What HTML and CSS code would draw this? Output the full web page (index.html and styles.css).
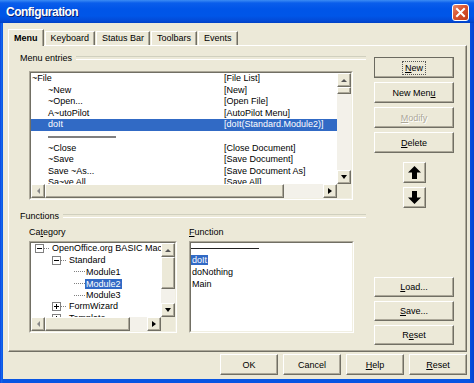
FILE: index.html
```html
<!DOCTYPE html>
<html lang="en">
<head>
    <meta charset="UTF-8">
    <meta name="viewport" content="width=device-width, initial-scale=1.0">
    <title>Configuration</title>
    <link rel="stylesheet" href="styles.css">
</head>
<body>
    <div class="window">
        <div class="titlebar">
            <span class="title">Configuration</span>
            <span class="close">
                <svg width="11" height="11" viewBox="0 0 11 11"><path d="M2 2 L9 9 M9 2 L2 9" stroke="#fff" stroke-width="2" stroke-linecap="square"/></svg>
            </span>
        </div>
        <div class="client">
            <div class="tabs">
                <span class="tab active">Menu</span>
                <span class="tab">Keyboard</span>
                <span class="tab">Status Bar</span>
                <span class="tab">Toolbars</span>
                <span class="tab">Events</span>
            </div>
            <div class="panel">
                <div class="main">
                    <div class="group-title"><span>Menu entries</span></div>
                    <div class="listbox menu-list">
                        <div class="inner">
                            <div class="rows">
                                <div class="row"><span class="c1">~File</span><span class="c2">[File List]</span></div>
                                <div class="row"><span class="c1 ind">~New</span><span class="c2">[New]</span></div>
                                <div class="row"><span class="c1 ind">~Open...</span><span class="c2">[Open File]</span></div>
                                <div class="row"><span class="c1 ind">A~utoPilot</span><span class="c2">[AutoPilot Menu]</span></div>
                                <div class="row selected"><span class="c1 ind">doIt</span><span class="c2">[doIt(Standard.Module2)]</span></div>
                                <div class="row"><span class="c1 ind"><span class="sep-line"></span></span></div>
                                <div class="row"><span class="c1 ind">~Close</span><span class="c2">[Close Document]</span></div>
                                <div class="row"><span class="c1 ind">~Save</span><span class="c2">[Save Document]</span></div>
                                <div class="row"><span class="c1 ind">Save ~As...</span><span class="c2">[Save Document As]</span></div>
                                <div class="row"><span class="c1 ind">Sa~ve All</span><span class="c2">[Save All]</span></div>
                            </div>
                            <div class="vscroll">
                                <span class="sbtn"><i class="arr up"></i></span>
                                <span class="thumb menu-vthumb"></span>
                                <span class="track"></span>
                                <span class="sbtn"><i class="arr down"></i></span>
                            </div>
                            <div class="hscroll">
                                <span class="sbtn"><i class="arr left"></i></span>
                                <span class="thumb menu-hthumb"></span>
                                <span class="track"></span>
                                <span class="sbtn"><i class="arr right"></i></span>
                            </div>
                            <div class="corner"></div>
                        </div>
                    </div>

                    <div class="group-title functions-title"><span>Functions</span></div>
                    <div class="func-grid">
                        <span class="field-label">Ca<u>t</u>egory</span>
                        <span class="field-label"><u>F</u>unction</span>
                        <div class="listbox tree">
                            <div class="inner">
                                <div class="rows">
                                    <div class="node"><span class="exp"></span><span class="stub"></span><span>OpenOffice.org BASIC Macros</span></div>
                                    <div class="node l1"><span class="exp"></span><span class="stub"></span><span>Standard</span></div>
                                    <div class="node l2"><span class="branch"></span><span class="label">Module1</span></div>
                                    <div class="node l2"><span class="branch"></span><span class="label selected">Module2</span></div>
                                    <div class="node l2"><span class="branch"></span><span class="label">Module3</span></div>
                                    <div class="node l1"><span class="exp plus"></span><span class="stub"></span><span>FormWizard</span></div>
                                    <div class="node l1"><span class="exp plus"></span><span class="stub"></span><span>Template</span></div>
                                </div>
                                <div class="vscroll">
                                    <span class="sbtn"><i class="arr up"></i></span>
                                    <span class="thumb tree-vthumb"></span>
                                    <span class="track"></span>
                                    <span class="sbtn"><i class="arr down"></i></span>
                                </div>
                                <div class="hscroll">
                                    <span class="sbtn"><i class="arr left"></i></span>
                                    <span class="thumb tree-hthumb"></span>
                                    <span class="track"></span>
                                    <span class="sbtn"><i class="arr right"></i></span>
                                </div>
                                <div class="corner"></div>
                            </div>
                        </div>
                        <div class="listbox func-list">
                            <div class="inner">
                                <div class="rows">
                                    <div class="frow"><span class="func-sep"></span></div>
                                    <div class="frow"><span class="label selected">doIt</span></div>
                                    <div class="frow"><span class="label">doNothing</span></div>
                                    <div class="frow"><span class="label">Main</span></div>
                                </div>
                            </div>
                        </div>
                    </div>
                </div>

                <div class="side">
                    <div class="btn-stack">
                        <button class="btn default"><span class="focus"><u>N</u>ew</span></button>
                        <button class="btn">New Men<u>u</u></button>
                        <button class="btn disabled"><u>M</u>odify</button>
                        <button class="btn"><u>D</u>elete</button>
                        <button class="btn arrow-btn first-arrow">
                            <svg width="13" height="13" viewBox="0 0 13 13"><polygon points="6.5,0 13,6.5 9,6.5 9,13 4,13 4,6.5 0,6.5" fill="#000"/></svg>
                        </button>
                        <button class="btn arrow-btn">
                            <svg width="13" height="13" viewBox="0 0 13 13"><polygon points="6.5,13 13,6.5 9,6.5 9,0 4,0 4,6.5 0,6.5" fill="#000"/></svg>
                        </button>
                    </div>
                    <div class="btn-stack lower">
                        <button class="btn small"><u>L</u>oad...</button>
                        <button class="btn small"><u>S</u>ave...</button>
                        <button class="btn small">R<u>e</u>set</button>
                    </div>
                </div>
            </div>
            <div class="footer">
                <button class="btn">OK</button>
                <button class="btn">Cancel</button>
                <button class="btn"><u>H</u>elp</button>
                <button class="btn"><u>R</u>eset</button>
            </div>
        </div>
    </div>
</body>
</html>
```

FILE: styles.css
```css
* {
    box-sizing: border-box;
}
body {
    margin: 0;
    overflow: hidden;
    font-family: 'Liberation Sans', Arial, sans-serif;
    font-size: 9px;
    color: #000;
}
.window {
    width: 474px;
    height: 383px;
    display: flex;
    flex-direction: column;
    background: linear-gradient(90deg, #0831D9 0, #166AEE 1px, #0855E3 3px, #0855E3 469px, #0843D0 474px);
}
.titlebar {
    height: 23px;
    flex: none;
    display: flex;
    align-items: center;
    justify-content: space-between;
    padding: 0 5px 0 6px;
    background: linear-gradient(#3C8CF4 0, #0A5EEB 3px, #0055E8 9px, #0056E8 16px, #0349D5 21px, #0040C4 23px);
}
.title {
    color: #fff;
    font-size: 12px;
    font-weight: bold;
    letter-spacing: -0.5px;
    text-shadow: 1px 1px #0A1F74;
}
.close {
    width: 17px;
    height: 17px;
    margin-top: 1px;
    border: 1px solid #fff;
    border-radius: 3px;
    background: linear-gradient(135deg, #E98B6D, #D9532F 45%, #C03A17);
    display: flex;
    align-items: center;
    justify-content: center;
}
.client {
    flex: 1;
    margin: 0 4px 4px 3px;
    background: #ECE9D8;
    padding: 6px 3px 0 5px;
    display: flex;
    flex-direction: column;
}
.tabs {
    height: 16px;
    display: flex;
    align-items: flex-end;
}
.tab {
    height: 14px;
    line-height: 13px;
    padding: 0 5px;
    border-left: 1px solid #fff;
    border-top: 1px solid #fff;
    border-right: 1px solid #716F64;
    box-shadow: inset -1px 0 #ACA899;
    margin-right: 1px;
    background: #ECE9D8;
}
.tab.active {
    height: 17px;
    line-height: 16px;
    margin-bottom: -1px;
    font-weight: bold;
    position: relative;
    z-index: 1;
}
.panel {
    height: 307px;
    border: 1px solid;
    border-color: #fff #716F64 #716F64 #fff;
    box-shadow: inset -1px -1px #ACA899;
    padding: 6px 12px 6px 0;
    display: grid;
    grid-template-columns: 357px 80px;
    column-gap: 8px;
}
.group-title {
    height: 12px;
    line-height: 12px;
    padding-left: 11px;
    display: flex;
    align-items: center;
}
.group-title::after {
    content: '';
    flex: 1;
    height: 2px;
    margin-left: 4px;
    border-top: 1px solid #D0D0BF;
    border-bottom: 1px solid #fff;
}
.functions-title {
    margin-top: 10px;
}
.listbox {
    border: 1px solid;
    border-color: #ACA899 #fff #fff #ACA899;
    background: #fff;
}
.listbox .inner {
    height: 100%;
    border: 1px solid;
    border-color: #716F64 #F1EFE2 #F1EFE2 #716F64;
    display: grid;
    grid-template-columns: 1fr 14px;
    grid-template-rows: 1fr 14px;
    overflow: hidden;
}
.menu-list {
    margin: 7px 0 0 20px;
    width: 324px;
    height: 129px;
}
.rows {
    overflow: hidden;
    min-width: 0;
    white-space: nowrap;
}
.row {
    height: 11.6px;
    line-height: 11.6px;
    display: flex;
    padding-left: 1px;
}
.row.selected {
    background: #316AC5;
    color: #fff;
}
.c1 {
    width: 192px;
    flex: none;
}
.c1.ind {
    padding-left: 16px;
}
.sep-line {
    display: inline-block;
    width: 68px;
    height: 2px;
    background: #808080;
    vertical-align: middle;
}
.vscroll, .hscroll {
    display: flex;
    background: #F3F1EA;
}
.vscroll {
    flex-direction: column;
}
.sbtn, .thumb {
    flex: none;
    background: #ECE9D8;
    border: 1px solid;
    border-color: #fff #716F64 #716F64 #fff;
    box-shadow: inset -1px -1px #ACA899;
    display: flex;
    align-items: center;
    justify-content: center;
}
.vscroll .sbtn {
    height: 14px;
}
.hscroll .sbtn {
    width: 14px;
}
.track {
    flex: 1;
}
.corner {
    background: #ECE9D8;
}
.arr {
    width: 0;
    height: 0;
    border: 3px solid transparent;
}
.arr.up {
    border-top: 0;
    border-bottom: 3px solid #555;
}
.arr.down {
    border-bottom: 0;
    border-top: 4px solid #000;
}
.arr.left {
    border-left: 0;
    border-right: 3px solid #888;
}
.arr.right {
    border-right: 0;
    border-left: 4px solid #000;
}
.menu-vthumb {
    height: 7px;
}
.menu-hthumb {
    width: 239px;
}
.tree-vthumb {
    height: 32px;
}
.tree-hthumb {
    width: 85px;
}
.func-grid {
    margin: 4px 0 0 20px;
    display: grid;
    grid-template-columns: 148px 165px;
    grid-template-rows: 12px 92px;
    column-gap: 12px;
    row-gap: 3px;
}
.field-label {
    line-height: 12px;
}
.node, .frow {
    height: 11.6px;
    line-height: 11.6px;
    display: flex;
    align-items: center;
    padding-left: 4px;
}
.node.l1 {
    padding-left: 21px;
}
.node.l2 {
    padding-left: 43px;
}
.exp {
    width: 9px;
    height: 9px;
    flex: none;
    border: 1px solid #808080;
    background: #fff linear-gradient(#000, #000) center / 5px 1px no-repeat;
}
.exp.plus {
    background:
        linear-gradient(#000, #000) center / 5px 1px no-repeat,
        linear-gradient(#000, #000) center / 1px 5px no-repeat,
        #fff;
}
.stub {
    width: 6px;
    height: 1px;
    margin-right: 2px;
    flex: none;
    background: repeating-linear-gradient(90deg, #808080 0 1px, transparent 1px 2px);
}
.branch {
    width: 11px;
    height: 1px;
    flex: none;
    background: repeating-linear-gradient(90deg, #808080 0 1px, transparent 1px 2px);
}
.label {
    padding: 0 1px;
    line-height: 10px;
}
.label.selected {
    background: #316AC5;
    color: #fff;
}
.func-list .inner {
    display: block;
}
.frow {
    padding-left: 0;
}
.func-sep {
    display: block;
    width: 68px;
    height: 1px;
    background: #222;
}
.side {
    display: flex;
    flex-direction: column;
    justify-content: space-between;
}
.btn-stack {
    display: flex;
    flex-direction: column;
    gap: 4px;
    margin-top: 5px;
}
.btn {
    height: 21px;
    padding: 0;
    font-family: inherit;
    font-size: 9px;
    color: #000;
    background: #ECE9D8;
    border: 1px solid;
    border-color: #fff #716F64 #716F64 #fff;
    box-shadow: inset -1px -1px #ACA899;
    display: flex;
    align-items: center;
    justify-content: center;
}
.btn.default {
    outline: 1px solid #6B6A60;
    outline-offset: -1px;
    border-color: #fff #404040 #404040 #fff;
}
.focus {
    padding: 1px 2px;
    border: 1px dotted #555;
}
.btn.disabled {
    color: #ACA899;
    text-shadow: 1px 1px #fff;
}
.arrow-btn {
    width: 23px;
    align-self: center;
}
.first-arrow {
    margin-top: 5px;
}
.btn-stack.lower {
    margin-top: 0;
}
.btn.small {
    height: 20px;
}
.footer {
    margin-top: 2px;
    display: flex;
    justify-content: flex-end;
    gap: 5px;
}
.footer .btn {
    width: 58px;
}
```
